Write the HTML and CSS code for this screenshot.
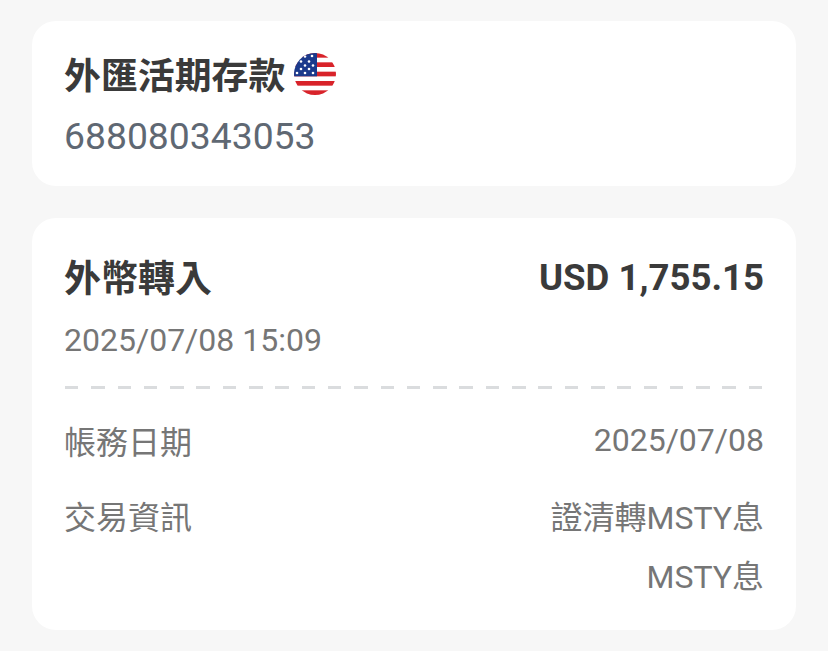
FILE: index.html
```html
<!DOCTYPE html>
<html lang="zh-Hant">
  <head>
    <meta charset="UTF-8" />
    <title>外幣轉入</title>
    <link rel="stylesheet" href="styles.css">
  </head>
  <body>
    <section class="card account">
      <div class="accountName">
        <span>外匯活期存款</span>
        <svg class="flag" viewBox="0 0 42 42" width="42" height="42">
          <defs><clipPath id="round"><circle cx="21" cy="21" r="21"/></clipPath></defs>
          <g clip-path="url(#round)">
            <rect width="42" height="42" fill="#fff"/>
            <g fill="#d8232a">
              <rect y="0" width="42" height="4.67"/>
              <rect y="9.33" width="42" height="4.67"/>
              <rect y="18.67" width="42" height="4.67"/>
              <rect y="28" width="42" height="4.67"/>
              <rect y="37.33" width="42" height="4.67"/>
            </g>
            <rect width="23" height="23.33" fill="#1b3a8c"/>
            <g fill="#fff">
              <circle cx="11" cy="3.5" r="1.3"/><circle cx="18" cy="3" r="1.3"/>
              <circle cx="7" cy="8.5" r="1.3"/><circle cx="15" cy="8.5" r="1.3"/>
              <circle cx="11" cy="12.5" r="1.3"/><circle cx="19" cy="12.5" r="1.3"/>
              <circle cx="7" cy="16" r="1.3"/><circle cx="15" cy="16" r="1.3"/>
              <circle cx="3" cy="20" r="1.3"/><circle cx="11" cy="20" r="1.3"/><circle cx="19" cy="20" r="1.3"/>
            </g>
          </g>
        </svg>
      </div>
      <div class="accountNo">688080343053</div>
    </section>

    <section class="card detail">
      <div class="titleRow">
        <span class="title">外幣轉入</span>
        <span class="amount">USD 1,755.15</span>
      </div>
      <div class="time">2025/07/08 15:09</div>
      <div class="dash"></div>
      <div class="row rowDate">
        <span class="label">帳務日期</span>
        <span class="value valueDate">2025/07/08</span>
      </div>
      <div class="row">
        <span class="label">交易資訊</span>
        <span class="value">證清轉MSTY息<br>MSTY息</span>
      </div>
    </section>
  </body>
</html>
```

FILE: styles.css
```css
* {
  box-sizing: border-box;
}
html,
body {
  height: 100%;
}
body {
  margin: 0;
  padding: 21px 32px 0;
  background: #f7f7f7;
  overflow: hidden;
  font-family: Roboto, "Noto Sans CJK TC", sans-serif;
}
.card {
  background: #fff;
  border-radius: 24px;
  padding: 0 32px;
}
.account {
  height: 165px;
  padding-top: 28px;
}
.accountName {
  display: flex;
  align-items: center;
  gap: 9px;
  height: 48px;
  font-size: 36.9px;
  font-weight: 700;
  color: #3a3a3a;
}
.flag {
  margin-top: 2px;
}
.accountNo {
  margin-top: 18px;
  font-size: 37.3px;
  line-height: 42px;
  color: #5f6873;
}
.detail {
  margin-top: 32px;
  height: 412px;
  padding-top: 37px;
}
.titleRow {
  display: flex;
  justify-content: space-between;
  align-items: flex-start;
}
.title {
  font-size: 37px;
  line-height: 50px;
  font-weight: 700;
  color: #3a3a3a;
}
.amount {
  font-size: 36.6px;
  line-height: 46px;
  font-weight: 700;
  color: #3a3a3a;
}
.time {
  margin-top: 15px;
  font-size: 32px;
  line-height: 40px;
  color: #767676;
}
.dash {
  margin: 26px 0 0 1px;
  height: 3px;
  background: repeating-linear-gradient(90deg, #dadcde 0 13.5px, transparent 13.5px 26.3px);
}
.row {
  display: flex;
  justify-content: space-between;
  align-items: flex-start;
  font-size: 32px;
  line-height: 58px;
  color: #767676;
}
.rowDate {
  margin-top: 25px;
  margin-bottom: 17px;
}
.value {
  text-align: right;
  line-height: 59px;
}
.valueDate {
  line-height: 52px;
}
```
